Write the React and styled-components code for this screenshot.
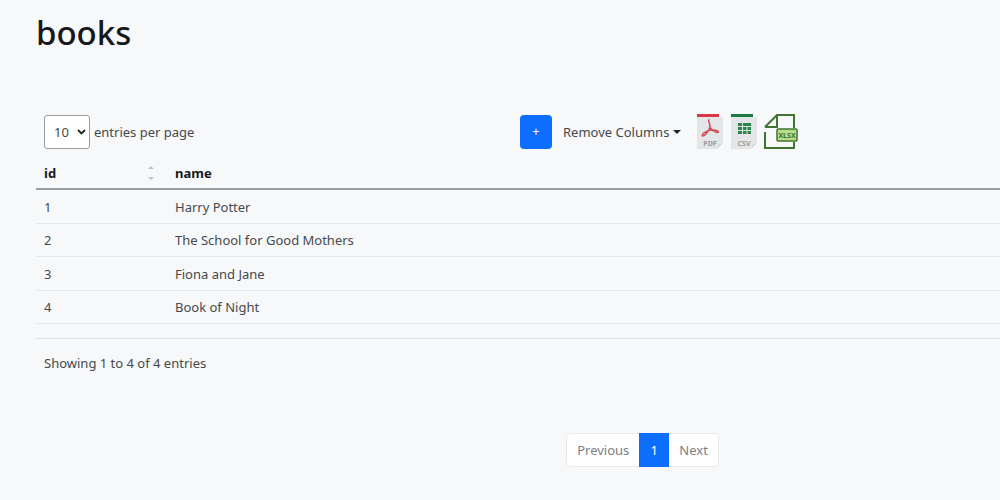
import React from "react";
import styled, { createGlobalStyle } from "styled-components";

const GlobalStyle = createGlobalStyle`
  *, *::before, *::after { box-sizing: border-box; }
  html { background: #f7f8f9; }
  body {
    margin: 0;
    background: #f7f8f9;
    color: #45494d;
    font-family: "Noto Sans", "Open Sans", sans-serif;
    font-size: 13px;
    line-height: 20px;
    overflow-x: hidden;
  }
  button, select { font: inherit; color: inherit; }
`;

const Page = styled.main`
  padding: 12px 0 32px 36px;
`;

const Title = styled.h1`
  margin: 0 0 60px;
  color: #16191c;
  font-size: 33px;
  font-weight: 500;
  line-height: 42px;
`;

const Toolbar = styled.div`
  display: grid;
  grid-template-columns: 1fr 1fr;
  align-items: center;
  height: 36px;
`;

const LengthLabel = styled.label`
  display: flex;
  align-items: center;
  gap: 4px;
  padding-left: 8px;
`;

const SelectWrap = styled.span`
  display: grid;
  align-items: center;
  width: 46px;

  & > * { grid-area: 1 / 1; }
  svg { justify-self: end; margin-right: 4px; pointer-events: none; }
`;

const LengthSelect = styled.select`
  appearance: none;
  width: 100%;
  height: 34px;
  padding: 0 0 0 9px;
  border: 1px solid #9a9da0;
  border-radius: 3px;
  background: #fff;
`;

const Actions = styled.div`
  display: flex;
  align-items: center;
  padding-left: 2px;
`;

const AddButton = styled.button`
  width: 32px;
  height: 34px;
  padding: 0;
  border: 0;
  border-radius: 4px;
  background: #0d6efd;
  color: #fff;
  font-size: 12px;
`;

const DropdownButton = styled.button`
  display: flex;
  align-items: center;
  gap: 4px;
  margin: 0 12px 0 8px;
  padding: 0 3px;
  border: 0;
  background: none;
  white-space: nowrap;
`;

const Caret = styled.span`
  border: 4px solid transparent;
  border-top-color: #212529;
  border-bottom: 0;
`;

const ExportButton = styled.button`
  display: block;
  height: 36px;
  margin-right: 4px;
  padding: 0;
  border: 0;
  background: none;

  svg { display: block; }
`;

const Table = styled.table`
  width: 100%;
  margin-top: 8px;
  border-collapse: separate;
  border-spacing: 0;
  table-layout: fixed;
`;

const HeadCell = styled.th`
  width: ${(p) => p.$width || "auto"};
  height: 32px;
  padding: 0 8px;
  border-bottom: 2px solid #9a9da0;
  color: #16191c;
  font-weight: 700;
  text-align: left;
`;

const HeadContent = styled.div`
  display: flex;
  align-items: center;
  justify-content: space-between;
  padding-right: 4px;
`;

const Row = styled.tr`
  height: 34px;
  &:nth-child(even) { height: 33px; }
`;

const Cell = styled.td`
  padding: 0 8px;
  border-bottom: 1px solid #e6e8ea;
`;

const Summary = styled.div`
  margin-top: 14px;
  padding: 14px 8px;
  border-top: 1px solid #dcdee0;
`;

const Pagination = styled.nav`
  display: flex;
  width: max-content;
  margin: 46px auto 0 55%;
  border: 1px solid #e8eaec;
  border-radius: 4px;
  background: #fff;
`;

const PageButton = styled.button`
  height: 32px;
  padding: 0 10px;
  border: 0;
  background: none;
  color: #7b8085;
`;

const CurrentPage = styled(PageButton)`
  width: 30px;
  height: 34px;
  margin: -1px 0;
  background: #0d6efd;
  color: #fff;
`;

const iconFont = '"Noto Sans", sans-serif';

function FileIcon({ color, label, children }) {
  return (
    <svg width="30" height="36" viewBox="0 0 30 36" aria-hidden="true">
      <path d="M1 3H27V29L21 35H1Z" fill="#e4e5e6" />
      <path d="M22 34V30H26Z" fill="#d6d8da" />
      <rect x="1" y="0" width="22" height="3" fill={color} />
      {children}
      <text x="14" y="32" textAnchor="middle" fontFamily={iconFont} fontSize="7" fontWeight="700" fill="#999c9f">
        {label}
      </text>
    </svg>
  );
}

function PdfIcon() {
  return (
    <FileIcon color="#d93848" label="PDF">
      <path
        d="M13 6C11.500 6.500 14.500 10 14 13C13.200 17 9 22 6.500 22C5 20.500 10 17 14 16.300C18 15.600 22 16.500 22.500 18C22 19.500 17 17.500 14.500 14"
        fill="none"
        stroke="#d04c58"
        strokeWidth="1.5"
        strokeLinejoin="round"
        strokeLinecap="round"
      />
    </FileIcon>
  );
}

function CsvIcon() {
  return (
    <FileIcon color="#1e7a43" label="CSV">
      <path d="M8 9H21V20H8Z" fill="#2a8550" />
      <path d="M8 12.500H21M8 16.500H21M12.500 9V20M17 12V20" stroke="#d9e4dc" strokeWidth="1" />
    </FileIcon>
  );
}

function XlsxIcon() {
  return (
    <svg width="34" height="36" viewBox="2 0 34 36" aria-hidden="true">
      <g fill="none" stroke="#3f7530" strokeWidth="2">
        <path d="M3 13L15 1H32V14M32 28V34H3V18" />
        <path d="M3 13H15V1" />
      </g>
      <rect x="15" y="15" width="20" height="12" rx="1" fill="#b9dc86" stroke="#3f7530" strokeWidth="1.500" />
      <text x="25" y="23.500" textAnchor="middle" fontFamily={iconFont} fontSize="7" fontWeight="700" fill="#3f7530">
        XLSX
      </text>
    </svg>
  );
}

function SortIcon() {
  return (
    <svg width="8" height="16" viewBox="0 0 8 16" aria-hidden="true">
      <path d="M1 4L4 1L7 4ZM1 12L4 15L7 12Z" fill="#bfc2c5" />
    </svg>
  );
}

const books = [
  { id: 1, name: "Harry Potter" },
  { id: 2, name: "The School for Good Mothers" },
  { id: 3, name: "Fiona and Jane" },
  { id: 4, name: "Book of Night" },
];

export default function App() {
  return (
    <>
      <GlobalStyle />
      <Page>
        <Title>books</Title>
        <Toolbar>
          <LengthLabel>
            <SelectWrap>
              <LengthSelect defaultValue="10">
                <option>10</option>
                <option>25</option>
                <option>50</option>
              </LengthSelect>
              <svg width="9" height="6" viewBox="0 0 9 6" aria-hidden="true">
                <path d="M1 1L4.500 4.500L8 1" fill="none" stroke="#212529" strokeWidth="1.800" />
              </svg>
            </SelectWrap>
            entries per page
          </LengthLabel>
          <Actions>
            <AddButton type="button" aria-label="Add">+</AddButton>
            <DropdownButton type="button" aria-haspopup="menu">
              Remove Columns
              <Caret />
            </DropdownButton>
            <ExportButton type="button" aria-label="Export PDF"><PdfIcon /></ExportButton>
            <ExportButton type="button" aria-label="Export CSV"><CsvIcon /></ExportButton>
            <ExportButton type="button" aria-label="Export XLSX"><XlsxIcon /></ExportButton>
          </Actions>
        </Toolbar>
        <Table>
          <thead>
            <tr>
              <HeadCell scope="col" $width="131px">
                <HeadContent>
                  id
                  <SortIcon />
                </HeadContent>
              </HeadCell>
              <HeadCell scope="col">name</HeadCell>
            </tr>
          </thead>
          <tbody>
            {books.map((book) => (
              <Row key={book.id}>
                <Cell>{book.id}</Cell>
                <Cell>{book.name}</Cell>
              </Row>
            ))}
          </tbody>
        </Table>
        <Summary>Showing 1 to 4 of 4 entries</Summary>
        <Pagination aria-label="Table pages">
          <PageButton type="button">Previous</PageButton>
          <CurrentPage type="button" aria-current="page">1</CurrentPage>
          <PageButton type="button">Next</PageButton>
        </Pagination>
      </Page>
    </>
  );
}
